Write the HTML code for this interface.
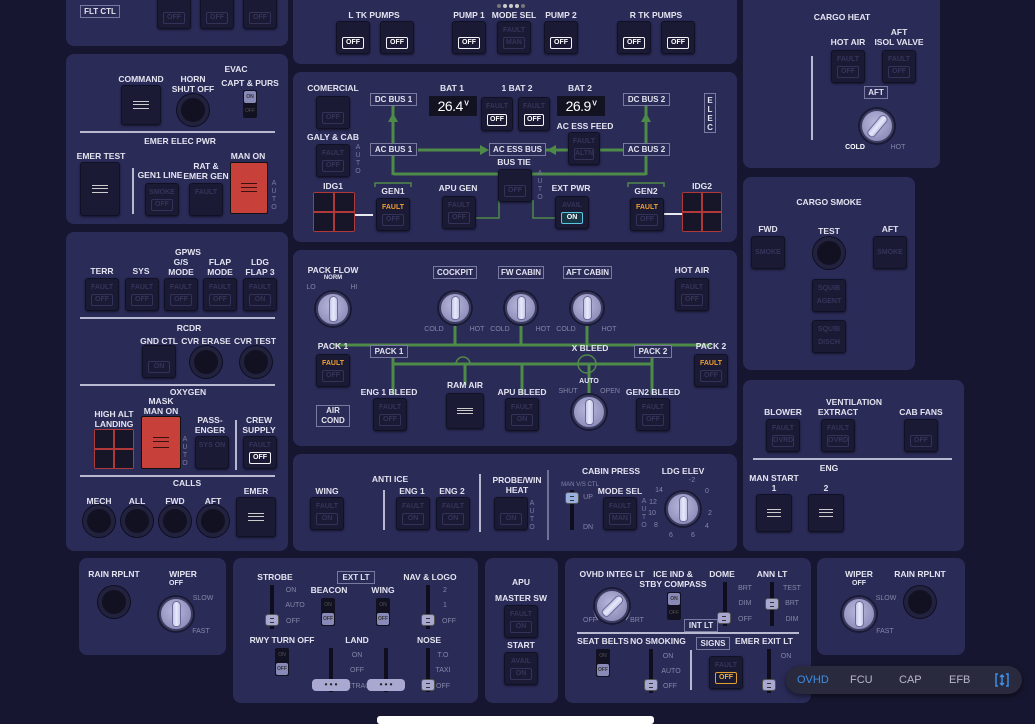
<!DOCTYPE html>
<html><head><meta charset="utf-8"><style>
*{margin:0;padding:0;box-sizing:border-box}
body{width:1035px;height:721px;background:#161630;position:relative;overflow:hidden;font-family:"Liberation Sans",sans-serif}
.p{position:absolute;background:#2b2b58;border-radius:8px}
.t{position:absolute;transform:translateX(-50%);white-space:nowrap;font:bold 8.5px/1.12 "Liberation Sans",sans-serif;color:#e4e4f0;text-align:center}
.s{position:absolute;transform:translateX(-50%);white-space:nowrap;font:7px/1.1 "Liberation Sans",sans-serif;color:#8686a8;text-align:center}
.b{position:absolute;width:34px;height:33px;background:#1a1a35;border:1px solid #111126;border-radius:3px;box-shadow:0 1px 2px #0008}
.b i{position:absolute;left:0;right:0;top:5px;text-align:center;font:bold 7px "Liberation Sans",sans-serif;color:#35355a;font-style:normal}
.b i.o{color:#f0a030}
.b u{position:absolute;left:5px;right:5px;bottom:4px;height:12px;border:1px solid #33335a;text-decoration:none;text-align:center;font:bold 7px/10px "Liberation Sans",sans-serif;color:#35355a;border-radius:2px}
.b u.w{border:1.5px solid #f4f4f8;color:#fff;background:#1a1a35}
.b u.c{border:1.5px solid #5ac8e0;color:#fff;background:#183848}
.b u.y{border:1.5px solid #e0a030;color:#f0b040}
.ln{position:absolute;height:1.5px;background:#b8b8d0}
.vl{position:absolute;width:1.5px;background:#b8b8d0}
.bx{position:absolute;border:1px solid #7a7aa0;color:#e4e4f0;font:bold 8px/11px "Liberation Sans",sans-serif;text-align:center;white-space:nowrap;background:#2b2b58}
.r{position:absolute;border-radius:50%;background:#111122;border:4px solid #22223e;box-shadow:0 0 0 1px #0d0d20}
.k{position:absolute;border-radius:50%;background:radial-gradient(circle at 45% 40%,#b8b8dc,#9090bc 70%,#6e6e98);border:2px solid #3c3c62;box-shadow:0 0 0 2px #1a1a35}
.k b{position:absolute;left:50%;top:6%;width:9px;height:88%;margin-left:-4.5px;border-radius:5px 5px 4px 4px;background:linear-gradient(90deg,#c8c8ea,#e8e8fa,#c8c8ea);border:1px solid #6a6a98}
.g{position:absolute;border:1.5px solid #b03838;display:grid;grid-template-columns:1fr 1fr;gap:1.5px;background:#b03838;border-radius:2px}
.g div{background:#161628}
.red{position:absolute;background:#c8403a;border:1px solid #111;border-radius:2px}
.bars{position:absolute;left:28%;right:28%;top:40%;height:20%;border-top:1.5px solid #ccc;border-bottom:1.5px solid #ccc}
.bars:after{content:"";position:absolute;left:0;right:0;top:50%;border-top:1.5px solid #ccc;margin-top:-1px}
.red .bars,.red .bars:after{border-color:#3a1010}
.tg{position:absolute;width:14px;height:28px;background:#111122;border-radius:2px}
.tg span{position:absolute;left:1px;right:1px;height:12px;background:#8a8ab8;border-radius:2px;font:bold 5px/12px "Liberation Sans";color:#333;text-align:center}
.tg em{position:absolute;left:0;right:0;font:5px/12px "Liberation Sans";color:#555;text-align:center;font-style:normal}
.sl{position:absolute;width:4px;background:#0e0e1e}
.kn{position:absolute;width:14px;height:12px;background:#a8a8d0;border-radius:3px;border:1px solid #555}
.kn:after{content:"";position:absolute;left:4px;right:4px;top:3px;height:3px;border-top:1px solid #333;border-bottom:1px solid #333}
.vt{position:absolute;width:8px;font:7px/8px "Liberation Sans";color:#7a7aa0;text-align:center;word-break:break-all}
.dsp{position:absolute;width:48px;height:20px;background:#121220;color:#fff;font:14px/20px "Liberation Sans",sans-serif;text-align:center;letter-spacing:-0.5px}
</style></head><body>

<!-- panels -->
<div class="p" style="left:66px;top:-8px;width:222px;height:54px"></div>
<div class="p" style="left:66px;top:54px;width:222px;height:170px"></div>
<div class="p" style="left:66px;top:232px;width:222px;height:319px"></div>
<div class="p" style="left:293px;top:-8px;width:444px;height:72px"></div>
<div class="p" style="left:293px;top:72px;width:444px;height:170px"></div>
<div class="p" style="left:293px;top:250px;width:444px;height:196px"></div>
<div class="p" style="left:293px;top:454px;width:444px;height:97px"></div>
<div class="p" style="left:743px;top:-8px;width:197px;height:176px"></div>
<div class="p" style="left:743px;top:177px;width:172px;height:193px"></div>
<div class="p" style="left:743px;top:380px;width:221px;height:171px"></div>
<div class="p" style="left:79px;top:558px;width:147px;height:97px"></div>
<div class="p" style="left:233px;top:558px;width:245px;height:145px"></div>
<div class="p" style="left:485px;top:558px;width:73px;height:145px"></div>
<div class="p" style="left:565px;top:558px;width:246px;height:145px"></div>
<div class="p" style="left:817px;top:558px;width:148px;height:97px"></div>

<div style="position:absolute;left:503px;top:4px;width:4px;height:4px;border-radius:50%;background:#ccc;box-shadow:6px 0 #ccc,12px 0 #ccc,-6px 0 #777,18px 0 #777"></div>

<!-- top-left -->
<div class="bx" style="left:80px;top:5px;width:40px">FLT CTL</div>
<div class="b" style="left:157px;top:-4px"><u>OFF</u></div>
<div class="b" style="left:200px;top:-4px"><u>OFF</u></div>
<div class="b" style="left:243px;top:-4px"><u>OFF</u></div>

<!-- EVAC -->
<div class="t" style="left:236px;top:65px">EVAC</div>
<div class="t" style="left:141px;top:75px">COMMAND</div>
<div class="b" style="left:121px;top:85px;width:40px;height:40px"><div class="bars"></div></div>
<div class="t" style="left:193px;top:75px">HORN<br>SHUT OFF</div>
<div class="r" style="left:177px;top:94px;width:32px;height:32px"></div>
<div class="t" style="left:250px;top:79px">CAPT &amp; PURS</div>
<div class="tg" style="left:243px;top:90px"><span style="top:1px">ON</span><em style="bottom:1px">OFF</em></div>
<div class="ln" style="left:80px;top:131px;width:195px"></div>
<div class="t" style="left:180px;top:137px">EMER ELEC PWR</div>
<div class="t" style="left:101px;top:152px">EMER TEST</div>
<div class="b" style="left:80px;top:162px;width:40px;height:54px"><div class="bars" style="top:42%;height:16%"></div></div>
<div class="vl" style="left:132px;top:168px;height:46px"></div>
<div class="t" style="left:160px;top:171px">GEN1 LINE</div>
<div class="b" style="left:145px;top:183px"><i>SMOKE</i><u>OFF</u></div>
<div class="t" style="left:206px;top:162px">RAT &amp;<br>EMER GEN</div>
<div class="b" style="left:189px;top:183px"><i>FAULT</i></div>
<div class="t" style="left:248px;top:152px">MAN ON</div>
<div class="red" style="left:230px;top:162px;width:38px;height:52px"><div class="bars" style="top:40%;height:18%"></div></div>
<div class="vt" style="left:270px;top:180px">AUTO</div>

<!-- GPWS -->
<div class="t" style="left:188px;top:248px">GPWS</div>
<div class="t" style="left:102px;top:267px">TERR</div>
<div class="t" style="left:141px;top:267px">SYS</div>
<div class="t" style="left:181px;top:258px">G/S<br>MODE</div>
<div class="t" style="left:220px;top:258px">FLAP<br>MODE</div>
<div class="t" style="left:260px;top:258px">LDG<br>FLAP 3</div>
<div class="b" style="left:85px;top:278px"><i>FAULT</i><u>OFF</u></div>
<div class="b" style="left:125px;top:278px"><i>FAULT</i><u>OFF</u></div>
<div class="b" style="left:164px;top:278px"><i>FAULT</i><u>OFF</u></div>
<div class="b" style="left:203px;top:278px"><i>FAULT</i><u>OFF</u></div>
<div class="b" style="left:243px;top:278px"><i>FAULT</i><u>ON</u></div>
<div class="ln" style="left:80px;top:317px;width:195px"></div>
<div class="t" style="left:189px;top:324px">RCDR</div>
<div class="t" style="left:159px;top:337px">GND CTL</div>
<div class="b" style="left:142px;top:345px"><u>ON</u></div>
<div class="t" style="left:206px;top:337px">CVR ERASE</div>
<div class="r" style="left:190px;top:346px;width:32px;height:32px"></div>
<div class="t" style="left:255px;top:337px">CVR TEST</div>
<div class="r" style="left:240px;top:346px;width:32px;height:32px"></div>
<div class="ln" style="left:80px;top:384px;width:195px"></div>
<div class="t" style="left:188px;top:388px">OXYGEN</div>
<div class="t" style="left:114px;top:410px">HIGH ALT<br>LANDING</div>
<div class="g" style="left:94px;top:429px;width:40px;height:40px"><div></div><div></div><div></div><div></div></div>
<div class="t" style="left:161px;top:397px">MASK<br>MAN ON</div>
<div class="red" style="left:141px;top:416px;width:40px;height:53px"><div class="bars"></div></div>
<div class="vt" style="left:181px;top:436px">AUTO</div>
<div class="t" style="left:210px;top:416px">PASS-<br>ENGER</div>
<div class="b" style="left:195px;top:436px"><i>SYS ON</i></div>
<div class="vl" style="left:235px;top:420px;height:50px"></div>
<div class="t" style="left:259px;top:416px">CREW<br>SUPPLY</div>
<div class="b" style="left:243px;top:436px"><i>FAULT</i><u class="w">OFF</u></div>
<div class="ln" style="left:80px;top:475px;width:195px"></div>
<div class="t" style="left:187px;top:479px">CALLS</div>
<div class="t" style="left:99px;top:497px">MECH</div>
<div class="t" style="left:137px;top:497px">ALL</div>
<div class="t" style="left:175px;top:497px">FWD</div>
<div class="t" style="left:213px;top:497px">AFT</div>
<div class="r" style="left:83px;top:505px;width:32px;height:32px"></div>
<div class="r" style="left:121px;top:505px;width:32px;height:32px"></div>
<div class="r" style="left:159px;top:505px;width:32px;height:32px"></div>
<div class="r" style="left:197px;top:505px;width:32px;height:32px"></div>
<div class="t" style="left:256px;top:487px">EMER</div>
<div class="b" style="left:236px;top:497px;width:40px;height:40px"><div class="bars"></div></div>

<!-- FUEL top -->
<div class="t" style="left:374px;top:11px">L TK PUMPS</div>
<div class="b" style="left:336px;top:21px"><u class="w">OFF</u></div>
<div class="b" style="left:380px;top:21px"><u class="w">OFF</u></div>
<div class="t" style="left:469px;top:11px">PUMP 1</div>
<div class="b" style="left:452px;top:21px"><u class="w">OFF</u></div>
<div class="t" style="left:514px;top:11px">MODE SEL</div>
<div class="b" style="left:497px;top:21px"><i>FAULT</i><u>MAN</u></div>
<div class="t" style="left:561px;top:11px">PUMP 2</div>
<div class="b" style="left:544px;top:21px"><u class="w">OFF</u></div>
<div class="t" style="left:656px;top:11px">R TK PUMPS</div>
<div class="b" style="left:617px;top:21px"><u class="w">OFF</u></div>
<div class="b" style="left:661px;top:21px"><u class="w">OFF</u></div>

<!-- green lines -->
<svg style="position:absolute;left:0;top:0" width="1035" height="721">
<g stroke="#4e8a48" stroke-width="3" fill="none">
<path d="M393 105V175M646 105V175M393 174H646M418 150H480M546 150H576M600 150H623"/>
<path d="M455 325V345M521 325V345M587 325V345M333 345H711M393 364H652M393 345V395M652 345V395M465 364V385M522 364V395M589 364V395"/>
</g>
<g fill="#4e8a48"><path d="M480 145L489 150L480 155Z"/><path d="M556 145L547 150L556 155Z"/><path d="M388 122L393 113L398 122Z"/><path d="M641 122L646 113L651 122Z"/></g>
<g stroke="#4e8a48" stroke-width="1.5" fill="none"><path d="M475 218H499V200M533 200V218H555"/><path d="M375 187V183H411V187M628 187V183H664V187"/><circle cx="587" cy="364" r="9"/><path d="M456 364A7 7 0 0 1 470 364"/></g>
<g stroke="#e8e8f0" stroke-width="2"><path d="M355 215H373M664 214H682"/></g>
</svg>

<!-- ELEC -->
<div class="t" style="left:333px;top:84px">COMERCIAL</div>
<div class="b" style="left:316px;top:96px"><u>OFF</u></div>
<div class="t" style="left:333px;top:133px">GALY &amp; CAB</div>
<div class="b" style="left:316px;top:144px"><i>FAULT</i><u>OFF</u></div>
<div class="vt" style="left:354px;top:144px">AUTO</div>
<div class="t" style="left:333px;top:182px">IDG1</div>
<div class="g" style="left:313px;top:192px;width:42px;height:40px"><div></div><div></div><div></div><div></div></div>
<div class="bx" style="left:370px;top:93px;width:47px">DC BUS 1</div>
<div class="bx" style="left:623px;top:93px;width:47px">DC BUS 2</div>
<div class="bx" style="left:370px;top:143px;width:47px">AC BUS 1</div>
<div class="bx" style="left:489px;top:143px;width:57px">AC ESS BUS</div>
<div class="bx" style="left:623px;top:143px;width:47px">AC BUS 2</div>
<div class="bx" style="left:704px;top:93px;width:12px;height:40px;line-height:9px;padding-top:2px">E<br>L<br>E<br>C</div>
<div class="t" style="left:452px;top:84px">BAT 1</div>
<div class="dsp" style="left:429px;top:96px">26.4<sup style="font:bold 7px 'Liberation Sans'"> V</sup></div>
<div class="t" style="left:517px;top:84px">1 BAT 2</div>
<div class="b" style="left:481px;top:97px;width:32px;height:34px"><i>FAULT</i><u class="w">OFF</u></div>
<div class="b" style="left:518px;top:97px;width:32px;height:34px"><i>FAULT</i><u class="w">OFF</u></div>
<div class="t" style="left:580px;top:84px">BAT 2</div>
<div class="dsp" style="left:557px;top:96px">26.9<sup style="font:bold 7px 'Liberation Sans'"> V</sup></div>
<div class="t" style="left:585px;top:122px">AC ESS FEED</div>
<div class="b" style="left:568px;top:132px;width:32px"><i>FAULT</i><u>ALTN</u></div>
<div class="t" style="left:514px;top:158px">BUS TIE</div>
<div class="b" style="left:498px;top:169px"><u>OFF</u></div>
<div class="vt" style="left:536px;top:170px">AUTO</div>
<div class="t" style="left:393px;top:187px">GEN1</div>
<div class="b" style="left:376px;top:198px"><i class="o">FAULT</i><u>OFF</u></div>
<div class="t" style="left:458px;top:184px">APU GEN</div>
<div class="b" style="left:442px;top:196px"><i>FAULT</i><u>OFF</u></div>
<div class="t" style="left:571px;top:184px">EXT PWR</div>
<div class="b" style="left:555px;top:196px"><i>AVAIL</i><u class="c">ON</u></div>
<div class="t" style="left:646px;top:187px">GEN2</div>
<div class="b" style="left:630px;top:198px"><i class="o">FAULT</i><u>OFF</u></div>
<div class="t" style="left:702px;top:182px">IDG2</div>
<div class="g" style="left:682px;top:192px;width:40px;height:40px"><div></div><div></div><div></div><div></div></div>

<!-- AIR COND -->
<div class="t" style="left:333px;top:266px">PACK FLOW</div>
<div class="t" style="left:333px;top:275px;font-size:6px">NORM</div>
<div class="s" style="left:311px;top:284px">LO</div><div class="s" style="left:354px;top:284px">HI</div>
<div class="k" style="left:316px;top:292px;width:34px;height:34px"><b></b></div>
<div class="bx" style="left:433px;top:266px;width:44px">COCKPIT</div>
<div class="bx" style="left:498px;top:266px;width:46px">FW CABIN</div>
<div class="bx" style="left:563px;top:266px;width:49px">AFT CABIN</div>
<div class="k" style="left:439px;top:292px;width:32px;height:32px"><b></b></div>
<div class="k" style="left:505px;top:292px;width:32px;height:32px"><b></b></div>
<div class="k" style="left:571px;top:292px;width:32px;height:32px"><b></b></div>
<div class="s" style="left:434px;top:326px">COLD</div><div class="s" style="left:477px;top:326px">HOT</div>
<div class="s" style="left:500px;top:326px">COLD</div><div class="s" style="left:543px;top:326px">HOT</div>
<div class="s" style="left:566px;top:326px">COLD</div><div class="s" style="left:609px;top:326px">HOT</div>
<div class="t" style="left:692px;top:266px">HOT AIR</div>
<div class="b" style="left:675px;top:278px"><i>FAULT</i><u>OFF</u></div>
<div class="t" style="left:333px;top:342px">PACK 1</div>
<div class="b" style="left:316px;top:354px"><i class="o">FAULT</i><u>OFF</u></div>
<div class="bx" style="left:370px;top:345px;width:38px">PACK 1</div>
<div class="bx" style="left:634px;top:345px;width:38px">PACK 2</div>
<div class="t" style="left:590px;top:344px">X BLEED</div>
<div class="t" style="left:711px;top:342px">PACK 2</div>
<div class="b" style="left:694px;top:354px"><i class="o">FAULT</i><u>OFF</u></div>
<div class="t" style="left:389px;top:388px">ENG 1 BLEED</div>
<div class="b" style="left:373px;top:398px"><i>FAULT</i><u>OFF</u></div>
<div class="t" style="left:465px;top:381px">RAM AIR</div>
<div class="b" style="left:446px;top:393px;width:38px;height:36px"><div class="bars"></div></div>
<div class="t" style="left:522px;top:388px">APU BLEED</div>
<div class="b" style="left:505px;top:398px"><i>FAULT</i><u>ON</u></div>
<div class="t" style="left:589px;top:378px;font-size:7px">AUTO</div>
<div class="s" style="left:568px;top:388px">SHUT</div><div class="s" style="left:610px;top:388px">OPEN</div>
<div class="k" style="left:572px;top:395px;width:34px;height:34px"><b></b></div>
<div class="t" style="left:653px;top:388px">GEN2 BLEED</div>
<div class="b" style="left:636px;top:398px"><i>FAULT</i><u>OFF</u></div>
<div class="bx" style="left:316px;top:405px;width:34px;height:22px;line-height:10px">AIR<br>COND</div>

<!-- ANTI ICE -->
<div class="t" style="left:327px;top:487px">WING</div>
<div class="b" style="left:310px;top:497px"><i>FAULT</i><u>ON</u></div>
<div class="t" style="left:390px;top:475px">ANTI ICE</div>
<div class="vl" style="left:383px;top:490px;height:40px"></div>
<div class="t" style="left:412px;top:487px">ENG 1</div>
<div class="b" style="left:396px;top:497px"><i>FAULT</i><u>ON</u></div>
<div class="t" style="left:452px;top:487px">ENG 2</div>
<div class="b" style="left:436px;top:497px"><i>FAULT</i><u>ON</u></div>
<div class="vl" style="left:479px;top:474px;height:58px"></div>
<div class="t" style="left:517px;top:476px">PROBE/WIN<br>HEAT</div>
<div class="b" style="left:494px;top:497px"><u>ON</u></div>
<div class="vt" style="left:528px;top:500px">AUTO</div>
<div class="vl" style="left:547px;top:470px;height:70px;opacity:.5"></div>
<div class="t" style="left:611px;top:467px">CABIN PRESS</div>
<div class="s" style="left:580px;top:482px;font-size:6px">MAN V/S CTL</div>
<div class="sl" style="left:570px;top:490px;height:40px"></div>
<div class="kn" style="left:565px;top:492px;background:#9ab0e0"></div>
<div class="s" style="left:588px;top:494px">UP</div><div class="s" style="left:588px;top:524px">DN</div>
<div class="t" style="left:620px;top:487px">MODE SEL</div>
<div class="b" style="left:603px;top:497px"><i>FAULT</i><u>MAN</u></div>
<div class="vt" style="left:640px;top:498px">AUTO</div>
<div class="t" style="left:683px;top:467px">LDG ELEV</div>
<div class="k" style="left:666px;top:492px;width:34px;height:34px"><b></b></div>
<div class="s" style="left:659px;top:487px">14</div><div class="s" style="left:653px;top:499px">12</div><div class="s" style="left:652px;top:510px">10</div><div class="s" style="left:656px;top:522px">8</div><div class="s" style="left:671px;top:532px">6</div><div class="s" style="left:693px;top:532px">6</div><div class="s" style="left:707px;top:523px">4</div><div class="s" style="left:710px;top:510px">2</div><div class="s" style="left:707px;top:488px">0</div><div class="s" style="left:692px;top:477px">-2</div>

<!-- CARGO HEAT -->
<div class="t" style="left:842px;top:13px">CARGO HEAT</div>
<div class="vl" style="left:811px;top:56px;height:84px"></div>
<div class="t" style="left:848px;top:38px">HOT AIR</div>
<div class="b" style="left:831px;top:50px"><i>FAULT</i><u>OFF</u></div>
<div class="t" style="left:899px;top:28px">AFT<br>ISOL VALVE</div>
<div class="b" style="left:882px;top:50px"><i>FAULT</i><u>OFF</u></div>
<div class="bx" style="left:864px;top:86px;width:24px">AFT</div>
<div class="k" style="left:860px;top:109px;width:34px;height:34px"><b style="transform:rotate(40deg)"></b></div>
<div class="s" style="left:855px;top:144px;color:#fff;font-weight:bold">COLD</div><div class="s" style="left:898px;top:144px">HOT</div>

<!-- CARGO SMOKE -->
<div class="t" style="left:829px;top:198px">CARGO SMOKE</div>
<div class="t" style="left:768px;top:225px">FWD</div>
<div class="b" style="left:751px;top:236px"><i style="top:12px">SMOKE</i></div>
<div class="t" style="left:829px;top:227px">TEST</div>
<div class="r" style="left:813px;top:237px;width:32px;height:32px"></div>
<div class="t" style="left:890px;top:225px">AFT</div>
<div class="b" style="left:873px;top:236px"><i style="top:12px">SMOKE</i></div>
<div class="b" style="left:812px;top:279px"><i>SQUIB</i><i style="top:18px">AGENT</i></div>
<div class="b" style="left:812px;top:320px"><i>SQUIB</i><i style="top:18px">DISCH</i></div>

<!-- VENTILATION -->
<div class="t" style="left:854px;top:398px">VENTILATION</div>
<div class="t" style="left:783px;top:408px">BLOWER</div>
<div class="b" style="left:766px;top:419px"><i>FAULT</i><u>OVRD</u></div>
<div class="t" style="left:838px;top:408px">EXTRACT</div>
<div class="b" style="left:821px;top:419px"><i>FAULT</i><u>OVRD</u></div>
<div class="t" style="left:921px;top:408px">CAB FANS</div>
<div class="b" style="left:904px;top:419px"><u>OFF</u></div>
<div class="ln" style="left:753px;top:458px;width:199px"></div>
<div class="t" style="left:829px;top:464px">ENG</div>
<div class="t" style="left:774px;top:474px">MAN START<br>1</div>
<div class="t" style="left:826px;top:484px">2</div>
<div class="b" style="left:756px;top:494px;width:36px;height:38px"><div class="bars"></div></div>
<div class="b" style="left:808px;top:494px;width:36px;height:38px"><div class="bars"></div></div>

<!-- RAIN left -->
<div class="t" style="left:114px;top:570px">RAIN RPLNT</div>
<div class="r" style="left:98px;top:586px;width:32px;height:32px"></div>
<div class="t" style="left:183px;top:570px">WIPER</div>
<div class="t" style="left:176px;top:580px;font-size:7px">OFF</div>
<div class="k" style="left:159px;top:597px;width:34px;height:34px"><b></b></div>
<div class="s" style="left:203px;top:595px">SLOW</div><div class="s" style="left:201px;top:628px">FAST</div>

<!-- EXT LT -->
<div class="t" style="left:275px;top:573px">STROBE</div>
<div class="bx" style="left:337px;top:571px;width:38px">EXT LT</div>
<div class="t" style="left:329px;top:586px">BEACON</div>
<div class="t" style="left:430px;top:573px">NAV &amp; LOGO</div>
<div class="sl" style="left:270px;top:585px;height:44px"></div>
<div class="kn" style="left:265px;top:614px"></div>
<div class="s" style="left:291px;top:587px">ON</div><div class="s" style="left:295px;top:602px">AUTO</div><div class="s" style="left:293px;top:618px">OFF</div>
<div class="tg" style="left:321px;top:598px"><em style="top:1px">ON</em><span style="bottom:1px">OFF</span></div>
<div class="t" style="left:383px;top:586px">WING</div>
<div class="tg" style="left:376px;top:598px"><em style="top:1px">ON</em><span style="bottom:1px">OFF</span></div>
<div class="sl" style="left:426px;top:585px;height:44px"></div>
<div class="kn" style="left:421px;top:614px"></div>
<div class="s" style="left:445px;top:587px">2</div><div class="s" style="left:445px;top:602px">1</div><div class="s" style="left:449px;top:618px">OFF</div>
<div class="t" style="left:282px;top:636px">RWY TURN OFF</div>
<div class="tg" style="left:275px;top:648px"><em style="top:1px">ON</em><span style="bottom:1px">OFF</span></div>
<div class="t" style="left:357px;top:636px">LAND</div>
<div class="sl" style="left:329px;top:648px;height:44px"></div>
<div class="sl" style="left:384px;top:648px;height:44px"></div>
<div class="s" style="left:357px;top:652px">ON</div><div class="s" style="left:357px;top:667px">OFF</div><div class="s" style="left:358px;top:683px">RETRACT</div>
<div style="position:absolute;left:312px;top:679px;width:38px;height:12px;background:#a8a8d0;border-radius:4px;font:bold 8px/12px 'Liberation Sans';color:#222;text-align:center">• • •</div>
<div style="position:absolute;left:367px;top:679px;width:38px;height:12px;background:#a8a8d0;border-radius:4px;font:bold 8px/12px 'Liberation Sans';color:#222;text-align:center">• • •</div>
<div class="t" style="left:429px;top:636px">NOSE</div>
<div class="sl" style="left:426px;top:648px;height:44px"></div>
<div class="kn" style="left:421px;top:679px"></div>
<div class="s" style="left:443px;top:652px">T.O</div><div class="s" style="left:443px;top:667px">TAXI</div><div class="s" style="left:443px;top:683px">OFF</div>

<!-- APU -->
<div class="t" style="left:521px;top:578px">APU</div>
<div class="t" style="left:521px;top:594px">MASTER SW</div>
<div class="b" style="left:504px;top:605px"><i>FAULT</i><u>ON</u></div>
<div class="t" style="left:521px;top:641px">START</div>
<div class="b" style="left:504px;top:652px"><i>AVAIL</i><u>ON</u></div>

<!-- INT LT -->
<div class="t" style="left:612px;top:570px">OVHD INTEG LT</div>
<svg style="position:absolute;left:590px;top:584px" width="44" height="44"><path d="M8 36A18 18 0 1 1 36 36" stroke="#8a8ab0" stroke-width="1" fill="none"/><path d="M33 33L38 34L36 29Z" fill="#8a8ab0"/></svg>
<div class="k" style="left:595px;top:589px;width:34px;height:34px"><b style="transform:rotate(45deg)"></b></div>
<div class="s" style="left:590px;top:617px">OFF</div><div class="s" style="left:637px;top:617px">BRT</div>
<div class="t" style="left:673px;top:570px">ICE IND &amp;<br>STBY COMPASS</div>
<div class="tg" style="left:667px;top:592px;height:28px"><span style="top:1px">ON</span><em style="bottom:1px">OFF</em></div>
<div class="t" style="left:722px;top:570px">DOME</div>
<div class="sl" style="left:723px;top:582px;height:44px"></div>
<div class="kn" style="left:717px;top:612px"></div>
<div class="s" style="left:745px;top:585px">BRT</div><div class="s" style="left:745px;top:600px">DIM</div><div class="s" style="left:745px;top:616px">OFF</div>
<div class="bx" style="left:684px;top:619px;width:34px">INT LT</div>
<div class="t" style="left:772px;top:570px">ANN LT</div>
<div class="sl" style="left:770px;top:582px;height:44px"></div>
<div class="kn" style="left:765px;top:598px"></div>
<div class="s" style="left:792px;top:585px">TEST</div><div class="s" style="left:792px;top:600px">BRT</div><div class="s" style="left:792px;top:616px">DIM</div>
<div class="ln" style="left:577px;top:632px;width:222px"></div>
<div class="t" style="left:603px;top:637px">SEAT BELTS</div>
<div class="tg" style="left:596px;top:649px"><em style="top:1px">ON</em><span style="bottom:1px">OFF</span></div>
<div class="t" style="left:658px;top:637px">NO SMOKING</div>
<div class="sl" style="left:649px;top:649px;height:44px"></div>
<div class="kn" style="left:644px;top:679px"></div>
<div class="s" style="left:668px;top:653px">ON</div><div class="s" style="left:671px;top:668px">AUTO</div><div class="s" style="left:670px;top:683px">OFF</div>
<div class="vl" style="left:690px;top:650px;height:40px"></div>
<div class="bx" style="left:696px;top:637px;width:34px">SIGNS</div>
<div class="b" style="left:709px;top:656px"><i>FAULT</i><u class="y">OFF</u></div>
<div class="t" style="left:764px;top:637px">EMER EXIT LT</div>
<div class="sl" style="left:767px;top:649px;height:44px"></div>
<div class="kn" style="left:762px;top:679px"></div>
<div class="s" style="left:786px;top:653px">ON</div>

<!-- WIPER right -->
<div class="t" style="left:859px;top:570px">WIPER</div>
<div class="t" style="left:859px;top:580px;font-size:7px">OFF</div>
<div class="k" style="left:842px;top:597px;width:34px;height:34px"><b></b></div>
<div class="s" style="left:886px;top:595px">SLOW</div><div class="s" style="left:885px;top:628px">FAST</div>
<div class="t" style="left:920px;top:570px">RAIN RPLNT</div>
<div class="r" style="left:904px;top:586px;width:32px;height:32px"></div>

<!-- tab bar -->
<div style="position:absolute;left:786px;top:666px;width:236px;height:28px;border-radius:14px;background:#2a2a3e;box-shadow:0 2px 6px #0008;font:11px/28px 'Liberation Sans',sans-serif;color:#b8b8c8">
<span style="position:absolute;left:11px;color:#3c8ee6">OVHD</span>
<span style="position:absolute;left:64px">FCU</span>
<span style="position:absolute;left:113px">CAP</span>
<span style="position:absolute;left:163px">EFB</span>
<svg style="position:absolute;left:208px;top:6px" width="16" height="16" viewBox="0 0 16 16" fill="none" stroke="#3c8ee6" stroke-width="1.5"><path d="M4 2H2V14H4M12 2H14V14H12M8 3V13M6 5L8 3L10 5M6 11L8 13L10 11"/></svg>
</div>
<div style="position:absolute;left:377px;top:716px;width:277px;height:8px;background:#fff;border-radius:3px"></div>
</body></html>
